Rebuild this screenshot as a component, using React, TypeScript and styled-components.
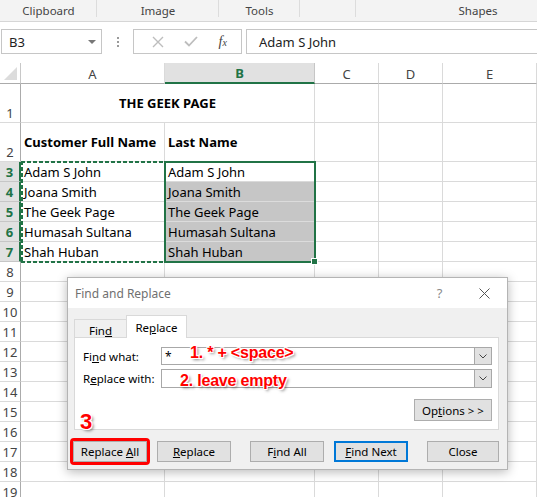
import * as React from 'react';
import styled, {createGlobalStyle, css} from 'styled-components';

const GREEN = '#217346';
const GRID = '#dadada';
const UI_FONT = '"Noto Sans", "Open Sans", sans-serif';

const GlobalStyle = createGlobalStyle`
    html, body {
        margin: 0;
        padding: 0;
        background: #fff;
        overflow: hidden;
    }
    body {
        font-family: ${UI_FONT};
    }
`;

const Page = styled.div`
    position: relative;
    width: 537px;
    height: 497px;
    overflow: hidden;
    background: #fff;
`;

/* ---------- ribbon group labels ---------- */

const Ribbon = styled.div`
    display: flex;
    height: 21px;
    background: #f3f3f3;
    border-bottom: 1px solid #d6d6d6;
    overflow: hidden;
`;

const RibbonGroup = styled.div<{$width: number; $last?: boolean}>`
    flex: 0 0 ${p => p.$width}px;
    display: flex;
    align-items: center;
    justify-content: center;
    font-size: 11.5px;
    color: #444;
    position: relative;
    ${p =>
        !p.$last &&
        css`
            &::after {
                content: '';
                position: absolute;
                right: 0;
                top: 0;
                height: 17px;
                width: 1px;
                background: #dcdcdc;
            }
        `}
`;

/* ---------- formula bar ---------- */

const FormulaBar = styled.div`
    display: flex;
    align-items: flex-start;
    height: 41px;
    padding-top: 7px;
    box-sizing: border-box;
    background: #fff;
`;

const NameBox = styled.div`
    margin-left: 1px;
    width: 101px;
    height: 25px;
    box-sizing: border-box;
    border: 1px solid #c6c6c6;
    display: flex;
    align-items: center;
    justify-content: space-between;
    padding: 0 4px 0 7px;
    font-size: 13px;
    color: #222;
`;

const DropTriangle = styled.span`
    width: 0;
    height: 0;
    border-left: 4px solid transparent;
    border-right: 4px solid transparent;
    border-top: 4px solid #777;
    margin-right: 1px;
`;

const Grip = styled.div`
    width: 31px;
    height: 25px;
    display: flex;
    flex-direction: column;
    align-items: center;
    justify-content: center;
    gap: 2px;
`;

const GripDot = styled.span`
    width: 2px;
    height: 2px;
    background: #9a9a9a;
`;

const FxBox = styled.div`
    width: 109px;
    height: 25px;
    box-sizing: border-box;
    border: 1px solid #c6c6c6;
    display: flex;
    align-items: center;
    justify-content: space-around;
    padding: 0 4px 0 8px;
`;

const FxLabel = styled.span`
    font-family: "Liberation Serif", serif;
    font-style: italic;
    font-size: 14px;
    color: #444;
    sub {
        font-size: 10px;
        vertical-align: 0;
    }
`;

const FormulaInput = styled.div`
    flex: 1;
    margin-left: 4px;
    height: 25px;
    box-sizing: border-box;
    border: 1px solid #c6c6c6;
    border-right: none;
    display: flex;
    align-items: center;
    padding-left: 12px;
    font-size: 13px;
    color: #222;
`;

/* ---------- sheet ---------- */

const Sheet = styled.div`
    display: grid;
    grid-template-columns: 21px 144px 150px 64px 64px 94px;
    grid-template-rows: 21px 39px 39px repeat(17, 20px);
    font-family: ${UI_FONT};
`;

const Corner = styled.div`
    grid-row: 1;
    grid-column: 1;
    box-sizing: border-box;
    border-right: 1px solid #c8c8c8;
    border-bottom: 1px solid #ababab;
    position: relative;
    &::after {
        content: '';
        position: absolute;
        right: 3px;
        bottom: 3px;
        width: 0;
        height: 0;
        border-left: 13px solid transparent;
        border-bottom: 13px solid #dcdcdc;
    }
`;

const ColHeader = styled.div<{$col: number; $active?: boolean}>`
    grid-row: 1;
    grid-column: ${p => p.$col};
    box-sizing: border-box;
    border-right: 1px solid ${GRID};
    border-bottom: 1px solid #ababab;
    display: flex;
    align-items: center;
    justify-content: center;
    font-size: 13px;
    color: #444;
    padding-top: 1px;
    ${p =>
        p.$active &&
        css`
            background: #e1e1e1;
            color: ${GREEN};
            font-weight: 700;
            border-bottom: 2px solid ${GREEN};
            border-right-color: #c6c6c6;
        `}
`;

const RowHeader = styled.div<{$row: number; $active?: boolean}>`
    grid-row: ${p => p.$row};
    grid-column: 1;
    box-sizing: border-box;
    border-right: 1px solid #ababab;
    border-bottom: 1px solid ${GRID};
    display: flex;
    align-items: flex-end;
    justify-content: center;
    font-size: 13px;
    line-height: 18px;
    color: #444;
    ${p =>
        p.$active &&
        css`
            background: #e1e1e1;
            color: ${GREEN};
            font-weight: 700;
            border-right: 2px solid ${GREEN};
            border-bottom-color: #c6c6c6;
        `}
`;

const Cell = styled.div<{$row: number; $col: number; $span?: number; $bold?: boolean; $center?: boolean; $shaded?: boolean}>`
    grid-row: ${p => p.$row};
    grid-column: ${p => p.$col} / span ${p => p.$span ?? 1};
    box-sizing: border-box;
    border-right: 1px solid ${GRID};
    border-bottom: 1px solid ${GRID};
    display: flex;
    align-items: center;
    justify-content: ${p => (p.$center ? 'center' : 'flex-start')};
    padding: 0 3px;
    font-size: 13px;
    font-weight: ${p => (p.$bold ? 700 : 400)};
    color: #000;
    white-space: nowrap;
    overflow: hidden;
    background: ${p => (p.$shaded ? '#c6c6c6' : 'transparent')};
    ${p =>
        p.$shaded &&
        css`
            border-color: #dcdcdc;
        `}
`;

const dash = (dir: string) => `repeating-linear-gradient(${dir}, ${GREEN} 0 4px, transparent 4px 6px)`;

const CopyMarquee = styled.div`
    grid-row: 4 / 9;
    grid-column: 2;
    margin: -1px -1px -1px 0;
    z-index: 3;
    pointer-events: none;
    background: ${dash('90deg')} top left / 100% 2px no-repeat, ${dash('90deg')} bottom left / 100% 2px no-repeat,
        ${dash('180deg')} top left / 2px 100% no-repeat, ${dash('180deg')} top right / 2px 100% no-repeat;
`;

const SelectionBox = styled.div`
    grid-row: 4 / 9;
    grid-column: 3;
    margin: -1px;
    z-index: 2;
    pointer-events: none;
    border: 2px solid ${GREEN};
    position: relative;
`;

const FillHandle = styled.span`
    position: absolute;
    right: -4px;
    bottom: -4px;
    width: 5px;
    height: 5px;
    background: ${GREEN};
    border: 1px solid #fff;
`;

/* ---------- find and replace dialog ---------- */

const Dialog = styled.div`
    position: absolute;
    left: 67px;
    top: 277px;
    width: 441px;
    height: 193px;
    box-sizing: border-box;
    background: #f0f0f0;
    border: 1px solid #b4b4b4;
    box-shadow: 0 2px 10px rgba(0, 0, 0, 0.28);
    z-index: 10;
    font-family: ${UI_FONT};
    font-size: 11.5px;
    color: #000;
    display: flex;
    flex-direction: column;
`;

const TitleBar = styled.div`
    height: 30px;
    flex: 0 0 30px;
    background: #fff;
    display: flex;
    align-items: center;
    padding: 0 0 0 7px;
    font-size: 12px;
    color: #707070;
`;

const Title = styled.span`
    flex: 1;
`;

const TitleButton = styled.span`
    width: 45px;
    display: flex;
    justify-content: center;
    color: #8a8a8a;
    font-size: 13px;
`;

const Body = styled.div`
    flex: 1;
    padding: 7px 8px 0 5px;
    display: flex;
    flex-direction: column;
`;

const Tabs = styled.div`
    display: flex;
    align-items: flex-end;
    height: 22px;
    margin-left: 1px;
`;

const Tab = styled.div<{$active?: boolean}>`
    box-sizing: border-box;
    display: flex;
    align-items: center;
    justify-content: center;
    border: 1px solid #d9d9d9;
    border-bottom: none;
    ${p =>
        p.$active
            ? css`
                  width: 61px;
                  height: 23px;
                  margin-bottom: -1px;
                  background: #fff;
                  position: relative;
                  z-index: 1;
                  padding-top: 1px;
              `
            : css`
                  width: 52px;
                  height: 18px;
                  border-right: none;
                  background: #f0f0f0;
                  padding-top: 3px;
              `}
`;

const Panel = styled.div`
    margin-left: 1px;
    height: 93px;
    box-sizing: border-box;
    background: #fff;
    border: 1px solid #d9d9d9;
    padding: 9px 6px 0 8px;
    display: flex;
    flex-direction: column;
`;

const FieldRow = styled.div<{$height: number}>`
    display: flex;
    align-items: center;
    height: ${p => p.$height}px;
    margin-bottom: 4px;
`;

const FieldLabel = styled.span`
    width: 78px;
`;

const Combo = styled.div`
    flex: 1;
    height: 100%;
    display: flex;
    box-sizing: border-box;
    border: 1px solid #a8a8a8;
    position: relative;
`;

const ComboText = styled.span`
    flex: 1;
    padding-left: 3px;
    display: flex;
    align-items: center;
    font-size: 12px;
`;

const ComboButton = styled.span`
    width: 16px;
    background: #e1e1e1;
    border-left: 1px solid #a8a8a8;
    display: flex;
    align-items: center;
    justify-content: center;
`;

const Annotation = styled.span<{$left: number; $top: number; $size?: number}>`
    position: absolute;
    left: ${p => p.$left}px;
    top: ${p => p.$top}px;
    font-family: "Liberation Sans", Arial, sans-serif;
    font-weight: 700;
    font-size: ${p => p.$size ?? 16}px;
    line-height: ${p => (p.$size ?? 16) + 2}px;
    letter-spacing: -0.2px;
    color: #ff0000;
    white-space: nowrap;
    z-index: 5;
    text-shadow: -1px -1px 0 #fff, 1px -1px 0 #fff, -1px 1px 0 #fff, 1px 1px 0 #fff, 0 -1px 0 #fff, 0 1px 0 #fff,
        2px 2px 3px rgba(0, 0, 0, 0.5);
`;

const OptionsRow = styled.div`
    display: flex;
    justify-content: flex-end;
    margin-top: 7px;
`;

const Button = styled.button<{$width?: number; $tall?: boolean; $default?: boolean; $marked?: boolean}>`
    width: ${p => p.$width ?? 74}px;
    height: ${p => (p.$tall ? 22 : 21)}px;
    box-sizing: border-box;
    background: #e1e1e1;
    border: 1px solid #adadad;
    border-radius: 0;
    font-family: ${UI_FONT};
    font-size: 11.5px;
    color: #000;
    padding: 0;
    display: flex;
    align-items: center;
    justify-content: center;
    ${p =>
        p.$default &&
        css`
            border: 2px solid #0078d7;
        `}
    ${p =>
        p.$marked &&
        css`
            outline: 3px solid #ff0000;
            outline-offset: 0;
            border-radius: 1px;
        `}
`;

const ButtonRow = styled.div`
    display: flex;
    margin-top: 11px;
`;

const ButtonPair = styled.div`
    display: flex;
    gap: 10px;
    margin-right: 19px;
`;

const Chevron: React.FC = () => (
    <svg width="8" height="5" viewBox="0 0 8 5">
        <path d="M0.5 0.5 L4 4 L7.5 0.5" fill="none" stroke="#444" strokeWidth="1" />
    </svg>
);

const CloseGlyph: React.FC = () => (
    <svg width="11" height="11" viewBox="0 0 11 11">
        <path d="M0.5 0.5 L10.5 10.5 M10.5 0.5 L0.5 10.5" stroke="#555" strokeWidth="1" />
    </svg>
);

const CancelGlyph: React.FC = () => (
    <svg width="12" height="12" viewBox="0 0 12 12">
        <path d="M1 1 L11 11 M11 1 L1 11" stroke="#bdbdbd" strokeWidth="1.4" />
    </svg>
);

const CheckGlyph: React.FC = () => (
    <svg width="14" height="11" viewBox="0 0 14 11">
        <path d="M1 5.5 L5 9.5 L13 1" fill="none" stroke="#bdbdbd" strokeWidth="1.8" />
    </svg>
);

const COLUMNS = ['A', 'B', 'C', 'D', 'E', ''];
const NAMES = ['Adam S John', 'Joana Smith', 'The Geek Page', 'Humasah Sultana', 'Shah Huban'];
const ROW_COUNT = 19;

const renderCells = () => {
    const cells: React.ReactNode[] = [];
    for (let r = 1; r <= ROW_COUNT; r++) {
        const gridRow = r + 1;
        cells.push(
            <RowHeader key={`rh${r}`} $row={gridRow} $active={r >= 3 && r <= 7}>
                {r}
            </RowHeader>,
        );
        if (r === 1) {
            cells.push(
                <Cell key="A1" $row={gridRow} $col={2} $span={2} $bold $center>
                    THE GEEK PAGE
                </Cell>,
            );
        } else if (r === 2) {
            cells.push(
                <Cell key="A2" $row={gridRow} $col={2} $bold>
                    Customer Full Name
                </Cell>,
                <Cell key="B2" $row={gridRow} $col={3} $bold>
                    Last Name
                </Cell>,
            );
        } else if (r <= 7) {
            const name = NAMES[r - 3];
            cells.push(
                <Cell key={`A${r}`} $row={gridRow} $col={2}>
                    {name}
                </Cell>,
                <Cell key={`B${r}`} $row={gridRow} $col={3} $shaded={r > 3}>
                    {name}
                </Cell>,
            );
        } else {
            cells.push(<Cell key={`A${r}`} $row={gridRow} $col={2} />, <Cell key={`B${r}`} $row={gridRow} $col={3} />);
        }
        for (let c = 4; c <= 6; c++) {
            cells.push(<Cell key={`${c}-${r}`} $row={gridRow} $col={c} />);
        }
    }
    return cells;
};

const App: React.FC = () => {
    return (
        <Page>
            <GlobalStyle />
            <Ribbon>
                <RibbonGroup $width={97}>Clipboard</RibbonGroup>
                <RibbonGroup $width={122}>Image</RibbonGroup>
                <RibbonGroup $width={81}>Tools</RibbonGroup>
                <RibbonGroup $width={56} />
                <RibbonGroup $width={244} $last>
                    Shapes
                </RibbonGroup>
            </Ribbon>

            <FormulaBar>
                <NameBox>
                    B3
                    <DropTriangle />
                </NameBox>
                <Grip>
                    <GripDot />
                    <GripDot />
                    <GripDot />
                </Grip>
                <FxBox>
                    <CancelGlyph />
                    <CheckGlyph />
                    <FxLabel>
                        f<sub>x</sub>
                    </FxLabel>
                </FxBox>
                <FormulaInput>Adam S John</FormulaInput>
            </FormulaBar>

            <Sheet>
                <Corner />
                {COLUMNS.map((label, i) => (
                    <ColHeader key={`ch${i}`} $col={i + 2} $active={label === 'B'}>
                        {label}
                    </ColHeader>
                ))}
                {renderCells()}
                <CopyMarquee />
                <SelectionBox>
                    <FillHandle />
                </SelectionBox>
            </Sheet>

            <Dialog>
                <TitleBar>
                    <Title>Find and Replace</Title>
                    <TitleButton>?</TitleButton>
                    <TitleButton>
                        <CloseGlyph />
                    </TitleButton>
                </TitleBar>
                <Body>
                    <Tabs>
                        <Tab>
                            <span>
                                Fin<u>d</u>
                            </span>
                        </Tab>
                        <Tab $active>
                            <span>
                                Re<u>p</u>lace
                            </span>
                        </Tab>
                    </Tabs>
                    <Panel>
                        <FieldRow $height={18}>
                            <FieldLabel>
                                Fi<u>n</u>d what:
                            </FieldLabel>
                            <Combo>
                                <ComboText>*</ComboText>
                                <ComboButton>
                                    <Chevron />
                                </ComboButton>
                                <Annotation $left={28} $top={-4}>
                                    1. * + &lt;space&gt;
                                </Annotation>
                            </Combo>
                        </FieldRow>
                        <FieldRow $height={19}>
                            <FieldLabel>
                                R<u>e</u>place with:
                            </FieldLabel>
                            <Combo>
                                <ComboText />
                                <ComboButton>
                                    <Chevron />
                                </ComboButton>
                                <Annotation $left={18} $top={2}>
                                    2. leave empty
                                </Annotation>
                            </Combo>
                        </FieldRow>
                        <OptionsRow>
                            <Button $width={78} $tall>
                                <span>
                                    Op<u>t</u>ions &gt; &gt;
                                </span>
                            </Button>
                        </OptionsRow>
                    </Panel>
                    <ButtonRow>
                        <ButtonPair>
                            <Button $marked>
                                <span>
                                    Replace <u>A</u>ll
                                </span>
                            </Button>
                            <Button>
                                <span>
                                    <u>R</u>eplace
                                </span>
                            </Button>
                        </ButtonPair>
                        <ButtonPair>
                            <Button>
                                <span>
                                    F<u>i</u>nd All
                                </span>
                            </Button>
                            <Button $default>
                                <span>
                                    <u>F</u>ind Next
                                </span>
                            </Button>
                        </ButtonPair>
                        <Button>Close</Button>
                    </ButtonRow>
                </Body>
                <Annotation $left={12} $top={132} $size={22}>
                    3
                </Annotation>
            </Dialog>
        </Page>
    );
};

export default App;
